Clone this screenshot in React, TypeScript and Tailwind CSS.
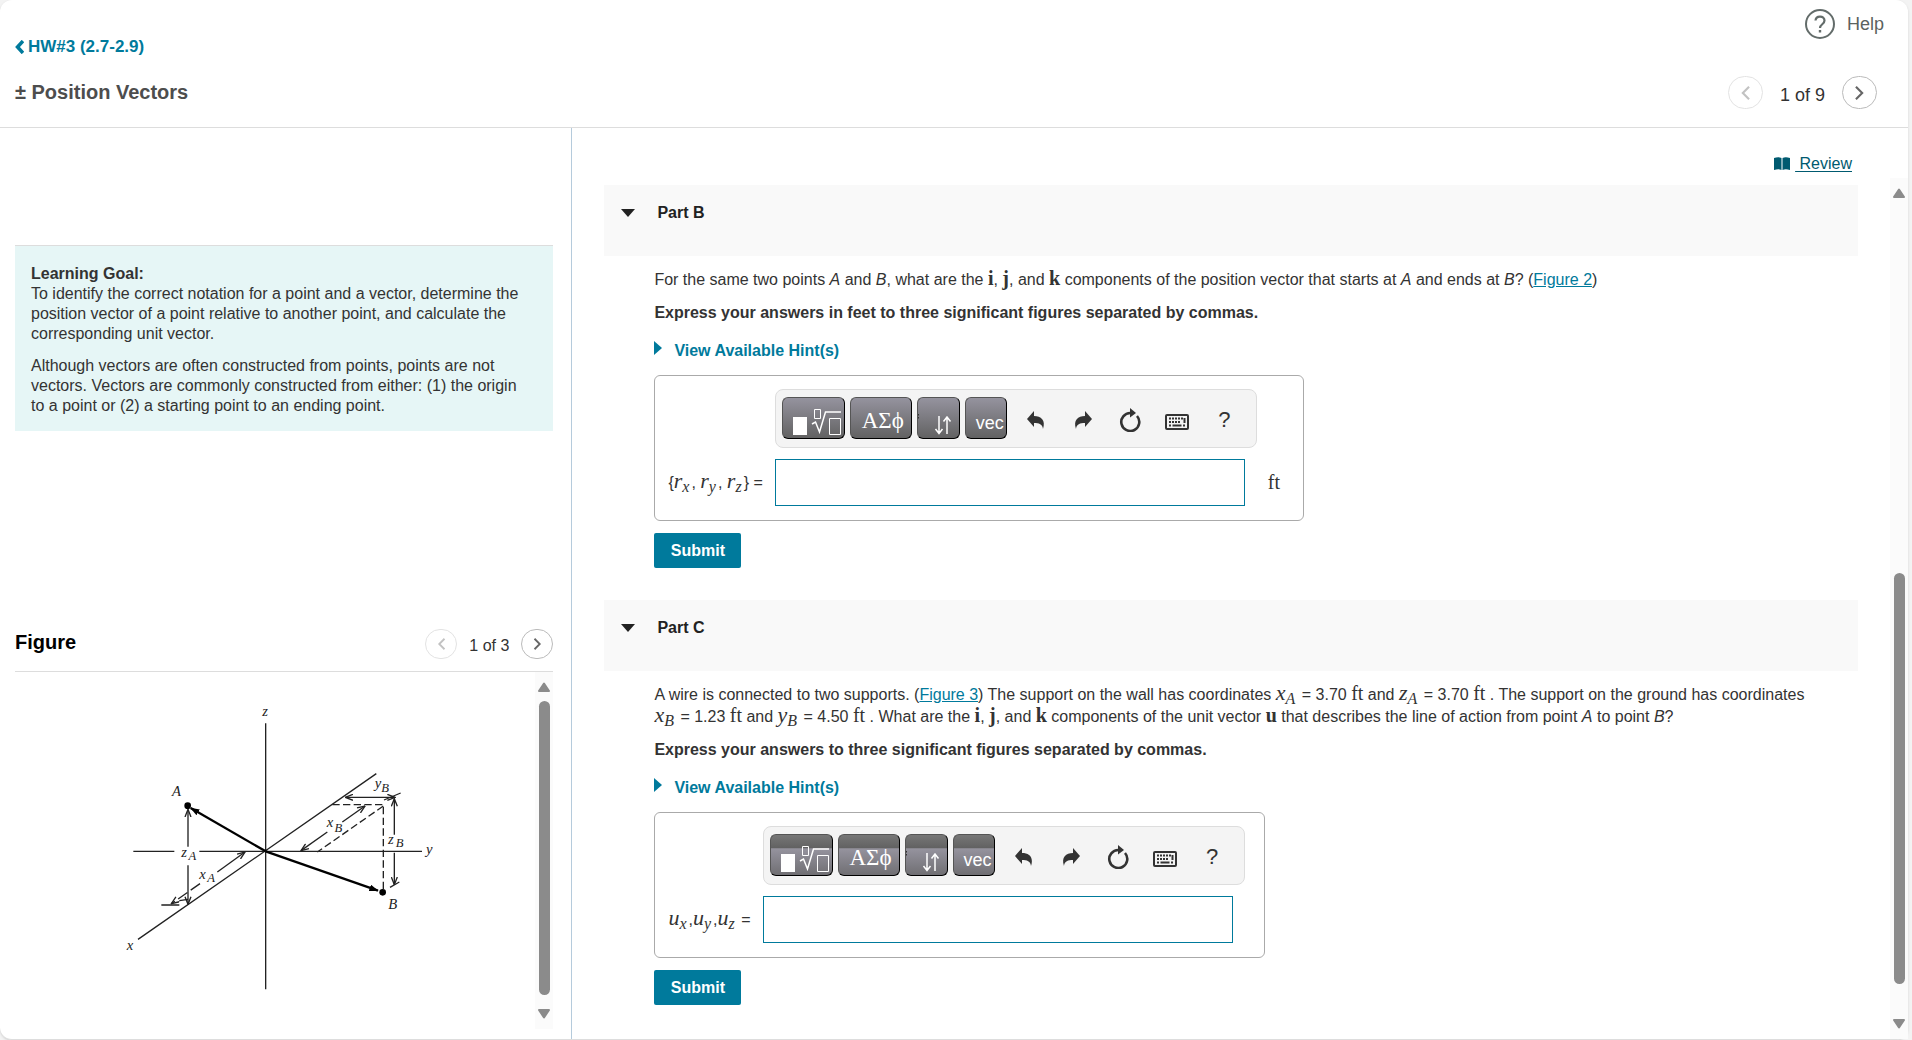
import type { ReactNode } from "react";

const Chevron = ({ direction, className }: { direction: "left" | "right"; className: string }) => (
  <svg viewBox="0 0 12 18" className={className} fill="none" stroke="currentColor" strokeWidth="2.4">
    <path d={direction === "left" ? "M10 2 3 9l7 7" : "M2 2l7 7-7 7"} />
  </svg>
);

const Arrow = ({ up }: { up?: boolean }) => (
  <svg viewBox="0 0 12 10" className="h-[10px] w-3 shrink-0 text-[#8b8b8b]" fill="currentColor" stroke="currentColor" strokeWidth="2" strokeLinejoin="round">
    <path d={up ? "M6 1.5 11 9H1z" : "M6 8.5 11 1H1z"} />
  </svg>
);

// bold upright vector names
const Vec = ({ children }: { children: ReactNode }) => (
  <b className="font-['Liberation_Serif',serif] text-[20px] leading-[0]">{children}</b>
);

const Ft = () => <span className="font-['Liberation_Serif',serif] text-[20px] leading-[0]">ft</span>;

// italic variable with an optional subscript
const Sym = ({ name, sub }: { name: string; sub: string }) => (
  <span className="mr-[2px] font-['Liberation_Serif',serif] text-[22px] leading-[0] italic">
    {name}
    <sub className="text-base leading-[0]">{sub}</sub>
  </span>
);

const keyClass =
  "flex h-[42px] items-center justify-center overflow-hidden rounded-md border border-t-[#555] border-l-[#555] border-r-black border-b-black text-white";

const toolClass = "flex h-8 w-[47px] items-center justify-center text-[#333]";

const Toolbar = ({ split }: { split?: boolean }) => {
  const fill = split
    ? "bg-[linear-gradient(#777,#616161_33%,#95939e_34%,#706f73)]"
    : "bg-[linear-gradient(#95939e,#626262)]";

  return (
    <div className="flex h-[59px] items-center rounded-lg border border-[#ddd] bg-[#f4f4f4] px-[6px]">
      <div className="mb-[2px] flex gap-[5px]">
        <button aria-label="Templates" className={`${keyClass} ${fill} w-[63px]`}>
          <svg viewBox="0 0 61 40" className="h-10 w-[61px]" fill="none" stroke="white">
            <path d="M10 19h14v18H10z" fill="white" stroke="none" />
            <path d="M31.500 11.500h6v9h-6z" />
            <path d="M29 26l3.500-2 4 10 6-20H58" strokeWidth="1.500" />
            <path d="M46.500 20.500h11v16h-11z" />
          </svg>
        </button>
        <button aria-label="Symbols" className={`${keyClass} ${fill} w-[62px] pt-[8px] pl-1 font-['Liberation_Serif',serif] text-[23px]`}>
          ΑΣϕ
        </button>
        <button aria-label="Subscript and superscript" className={`${keyClass} ${fill} w-[43px]`}>
          <svg viewBox="0 0 41 40" className="h-10 w-[41px]" fill="none" stroke="white" strokeWidth="1.500">
            <path d="M21 18v17M17.500 31l3.500 4.500 3.500-4.500M29 36V19M25.500 23.500l3.500-4.500 3.500 4.500" />
            <path d="M.5 16v1.500M.5 19v1.500" stroke="#333" strokeWidth="1" />
          </svg>
        </button>
        <button aria-label="Vectors" className={`${keyClass} ${fill} w-[42px] justify-end pt-[10px] pr-[2px] text-lg`}>
          vec
        </button>
      </div>
      <div className="mt-[2px] ml-[6px] flex">
        <button aria-label="Undo" className={toolClass}>
          <svg viewBox="0 0 20 20" className="size-5" fill="currentColor">
            <path d="M8 1v5c7 0 12 4 9 13-.5-5-4-6-9-6v4L1 9z" />
          </svg>
        </button>
        <button aria-label="Redo" className={toolClass}>
          <svg viewBox="0 0 20 20" className="size-5" fill="currentColor">
            <path d="M12 1v5C5 6 0 10 3 19c.5-5 4-6 9-6v4l7-8z" />
          </svg>
        </button>
        <button aria-label="Reset" className={toolClass}>
          <svg viewBox="0 0 22 24" className="h-6 w-[22px]" fill="none" stroke="currentColor" strokeWidth="2.600">
            <path d="M11.500 5A9 9 0 1 0 18 8" />
            <path d="M11 0l6 5-6 4.500z" fill="currentColor" stroke="none" />
          </svg>
        </button>
        <button aria-label="Keyboard shortcuts" className={toolClass}>
          <svg viewBox="0 0 24 16" className="mt-1 h-4 w-6" fill="none" stroke="currentColor">
            <rect x="1" y="1" width="22" height="14" rx="1" strokeWidth="2" />
            <path d="M4 4.500h14M4 8h12M4 11.500h2M18 11.500h2" strokeWidth="2" strokeDasharray="2 1" />
            <path d="M7.500 11.500h9M19.500 4v5" strokeWidth="2" />
          </svg>
        </button>
        <button aria-label="Help" className={`${toolClass} text-[22px]`}>
          ?
        </button>
      </div>
    </div>
  );
};

interface AnswerBoxProps {
  id: string;
  label: ReactNode;
  unit?: ReactNode;
  split?: boolean;
}

const AnswerBox = ({ id, label, unit, split }: AnswerBoxProps) => (
  <>
    <div className="flex w-fit items-end rounded-md border border-[#aaa] pt-[13px] pr-[19px] pb-[14px] pl-[13px]">
      <label htmlFor={id} className="flex h-[47px] items-center pr-3 whitespace-pre">
        {label}
      </label>
      <div className="w-[482px]">
        <Toolbar split={split} />
        <input id={id} type="text" className="mt-[11px] block h-[47px] w-[470px] border border-[#007a9c] bg-white px-2 outline-none" />
      </div>
      {unit && <div className="flex h-[47px] items-center pr-1 pb-[2px] pl-[11px]">{unit}</div>}
    </div>
    <button className="mt-3 flex h-[35px] w-[87px] items-center justify-center rounded-xs bg-[#007a9c] text-base font-bold text-white">
      Submit
    </button>
  </>
);

interface PartProps {
  title: string;
  text: ReactNode;
  instruction: string;
  children: ReactNode;
}

const Part = ({ title, text, instruction, children }: PartProps) => (
  <section className="pb-8">
    <div className="h-[71px] bg-[#f9f9f9] px-[17px] pt-4">
      <button className="flex items-center gap-[22px] text-base leading-6 font-bold text-[#222]">
        <svg viewBox="0 0 14 8" className="h-2 w-[14px]" fill="currentColor">
          <path d="M0 0h14L7 8z" />
        </svg>
        {title}
      </button>
    </div>
    <div className="pt-[13px] pl-[50px]">
      <p className="leading-[22px]">{text}</p>
      <p className="mt-[11px] leading-[22px] font-bold">{instruction}</p>
      <button className="mt-[13px] mb-[10px] flex items-center gap-3 leading-[28px] font-bold text-[#007a9c]">
        <svg viewBox="0 0 8 14" className="mb-[6px] h-[14px] w-2" fill="currentColor">
          <path d="M0 0v14l8-7z" />
        </svg>
        View Available Hint(s)
      </button>
      {children}
    </div>
  </section>
);

// dimension lines that end in an open arrow tip
const dimensions = [
  "M234 470V358",
  "M234 526V643",
  "M322 546 405 486",
  "M697 396 765 348",
  "M652 426 573 482",
  "M853 434V326",
  "M853 488V584",
];

const AxesFigure = () => (
  <svg viewBox="0 0 990 930" className="h-[310px] w-[330px]" fill="none" stroke="#222" strokeWidth="4">
    <defs>
      <marker id="tip" viewBox="0 0 26 22" refX="24" refY="11" markerWidth="26" markerHeight="22" markerUnits="userSpaceOnUse" orient="auto-start-reverse">
        <path d="M1 2 24 11 1 20" fill="none" stroke="#222" strokeWidth="4" />
      </marker>
      <marker id="head" viewBox="0 0 28 20" refX="26" refY="10" markerWidth="28" markerHeight="20" markerUnits="userSpaceOnUse" orient="auto">
        <path d="M0 0 28 10 0 20z" fill="#000" stroke="none" />
      </marker>
    </defs>
    <path d="M467 100V898M70 484H193M268 484H936M84 748 799 251" />
    <path d="M467 484 242 354" strokeWidth="7" stroke="#000" markerEnd="url(#head)" />
    <path d="M467 484 804 602" strokeWidth="7" stroke="#000" markerEnd="url(#head)" />
    <circle cx="233" cy="347" r="10" fill="#000" stroke="none" />
    <circle cx="818" cy="607" r="10" fill="#000" stroke="none" />
    {dimensions.map((d) => (
      <path key={d} d={d} markerEnd="url(#tip)" />
    ))}
    <path d="M270 581 184 641" strokeDasharray="34 12" markerEnd="url(#tip)" />
    <path d="M154 645H208M208 632l26-4" />
    <path d="M706 322H855" markerStart="url(#tip)" markerEnd="url(#tip)" />
    <path d="M822 330 872 309M840 592 868 576" />
    <path d="M667 344H820V600" strokeDasharray="22 10" />
    <path d="M820 348 622 486" strokeDasharray="22 10" />
    <g className="font-['Liberation_Serif',serif] text-[44px] italic" fill="#222" stroke="none">
      <text x="457" y="79">z</text>
      <text x="186" y="317">A</text>
      <text x="835" y="656">B</text>
      <text x="948" y="493">y</text>
      <text x="50" y="779">x</text>
      <text x="214" y="500">z<tspan dy="9" dx="4" fontSize="38">A</tspan></text>
      <text x="268" y="566">x<tspan dy="9" dx="4" fontSize="38">A</tspan></text>
      <text x="650" y="412">x<tspan dy="13" dx="4" fontSize="38">B</tspan></text>
      <text x="794" y="294">y<tspan dy="11" fontSize="38">B</tspan></text>
      <text x="834" y="462">z<tspan dy="9" dx="6" fontSize="38">B</tspan></text>
    </g>
  </svg>
);

const App = () => {
  return (
    <div className="flex min-h-screen bg-[#f3f3f3] pr-1 font-['Liberation_Sans',Arial,sans-serif] text-base text-[#333]">
      <div className="flex flex-1 flex-col rounded-xl border-b border-[#ddd] bg-white shadow-sm">
        <header className="flex h-32 justify-between border-b border-[#ddd] pl-[15px]">
          <div>
            <a href="#" className="mt-9 flex items-center gap-1 text-[17px] leading-[22px] font-bold text-[#007a9c]">
              <svg viewBox="0 0 9 14" className="h-[14px] w-[9px]" fill="none" stroke="currentColor" strokeWidth="3.500">
                <path d="M8 1 2.500 7 8 13" />
              </svg>
              HW#3 (2.7-2.9)
            </a>
            <h1 className="mt-[22px] text-xl leading-6 font-bold text-[#4d4d4d]">± Position Vectors</h1>
          </div>
          <div className="flex flex-col items-end">
            <a href="#" className="mt-2 mr-6 flex items-center gap-3 text-lg leading-8 text-[#5b6260]">
              <svg viewBox="0 0 30 30" className="size-[30px]" fill="none" stroke="#636c6a" strokeWidth="2">
                <circle cx="15" cy="15" r="14" />
                <path d="M10.500 11.500c.5-5.500 9-5 9 0 0 4-4.500 3.500-4.500 7.500" strokeWidth="2.200" />
                <path d="M15 21v2.500" strokeWidth="2.400" />
              </svg>
              Help
            </a>
            <div className="mt-9 mr-[31px] flex items-center gap-[17px] text-lg">
              <button aria-label="Previous item" disabled className="flex h-[33px] w-[35px] items-center justify-center rounded-full border border-[#e3e3e3] text-[#c2c2c2]">
                <Chevron direction="left" className="h-4 w-[11px]" />
              </button>
              <span className="pt-1">1 of 9</span>
              <button aria-label="Next item" className="flex h-[33px] w-[35px] items-center justify-center rounded-full border border-[#bbb] text-[#666]">
                <Chevron direction="right" className="h-4 w-[11px]" />
              </button>
            </div>
          </div>
        </header>

        <div className="flex flex-1">
          <aside className="flex w-[30%] shrink-0 flex-col border-r border-[#b5cbdc] pr-[18px] pl-[15px]">
            <div className="flex-1 pt-[117px]">
              <div className="border-t border-[#ddd] bg-[#e6f6f6] pt-[18px] pr-6 pb-[15px] pl-4 leading-5">
                <p>
                  <b>Learning Goal:</b>
                  <br />
                  To identify the correct notation for a point and a vector, determine the position vector of a point relative to another point, and calculate the corresponding unit vector.
                </p>
                <p className="mt-3">
                  Although vectors are often constructed from points, points are not vectors. Vectors are commonly constructed from either: (1) the origin to a point or (2) a starting point to an ending point.
                </p>
              </div>
            </div>

            <div className="flex items-center border-b border-[#ddd] pb-3">
              <h2 className="flex-1 pb-1 text-xl leading-6 font-bold text-black">Figure</h2>
              <button aria-label="Previous figure" disabled className="flex h-[30px] w-8 items-center justify-center rounded-full border border-[#e3e3e3] text-[#c2c2c2]">
                <Chevron direction="left" className="h-[14px] w-[9px]" />
              </button>
              <span className="px-3 pt-1">1 of 3</span>
              <button aria-label="Next figure" className="flex h-[30px] w-8 items-center justify-center rounded-full border border-[#bbb] text-[#666]">
                <Chevron direction="right" className="h-[14px] w-[9px]" />
              </button>
            </div>
            <div className="mb-[10px] flex h-[357px]">
              <div className="flex flex-1 justify-center pt-[18px]">
                <AxesFigure />
              </div>
              <div className="flex w-[18px] flex-col items-center gap-[9px] bg-[#fbfbfb] py-[10px]">
                <Arrow up />
                <div className="mb-[5px] w-[11px] flex-1 rounded-full bg-[#8b8b8b]" />
                <Arrow />
              </div>
            </div>
          </aside>

          <main className="flex flex-1 flex-col">
            <div className="flex h-[50px] items-end justify-end pr-[56px] pb-[2px] text-[#005a70]">
              <a href="#" className="flex items-center gap-[5px]">
                <svg viewBox="0 0 16 14" className="h-[14px] w-4" fill="currentColor">
                  <path d="M0 1C3 0 5.500 0 7.500 1v12C5.500 12 3 12 0 13zM16 1c-3-1-5.500-1-7.500 0v12c2-1 4.500-1 7.500 0z" />
                </svg>
                <span className="whitespace-pre underline underline-offset-2"> Review</span>
              </a>
            </div>
            <div className="flex flex-1">
              <div className="flex-1 pt-[7px] pr-8 pl-8">
                <Part
                  title="Part B"
                  instruction="Express your answers in feet to three significant figures separated by commas."
                  text={
                    <>
                      For the same two points <i>A</i> and <i>B</i>, what are the <Vec>i</Vec>, <Vec>j</Vec>, and <Vec>k</Vec> components of the position vector that starts at <i>A</i> and ends at <i>B</i>? (
                      <a href="#" className="text-[#007a9c] underline">Figure 2</a>)
                    </>
                  }
                >
                  <AnswerBox
                    id="part-b"
                    label={
                      <span>
                        {"{"}<Sym name="r" sub="x" />, <Sym name="r" sub="y" />, <Sym name="r" sub="z" />{"} ="}
                      </span>
                    }
                    unit={<Ft />}
                  />
                </Part>
                <Part
                  title="Part C"
                  instruction="Express your answers to three significant figures separated by commas."
                  text={
                    <>
                      A wire is connected to two supports. (<a href="#" className="text-[#007a9c] underline">Figure 3</a>) The support on the wall has coordinates <Sym name="x" sub="A" /> = 3.70 <Ft /> and <Sym name="z" sub="A" /> = 3.70 <Ft /> . The support on the ground has coordinates{" "}
                      <span className="whitespace-nowrap"><Sym name="x" sub="B" /> = 1.23 <Ft /></span> and <Sym name="y" sub="B" /> = 4.50 <Ft /> . What are the <Vec>i</Vec>, <Vec>j</Vec>, and <Vec>k</Vec> components of the unit vector <Vec>u</Vec> that describes the line of action from point <i>A</i> to point <i>B</i>?
                    </>
                  }
                >
                  <AnswerBox
                    id="part-c"
                    split
                    label={
                      <span>
                        <Sym name="u" sub="x" />,<Sym name="u" sub="y" />,<Sym name="u" sub="z" /> =
                      </span>
                    }
                  />
                </Part>
              </div>
              <div className="flex w-[18px] flex-col items-center bg-[#fbfbfb] py-[10px]">
                <Arrow up />
                <div className="flex-[375]" />
                <div className="w-[11px] flex-[410] rounded-full bg-[#8b8b8b]" />
                <div className="flex-[35]" />
                <Arrow />
              </div>
            </div>
          </main>
        </div>
      </div>
    </div>
  );
};

export default App;
